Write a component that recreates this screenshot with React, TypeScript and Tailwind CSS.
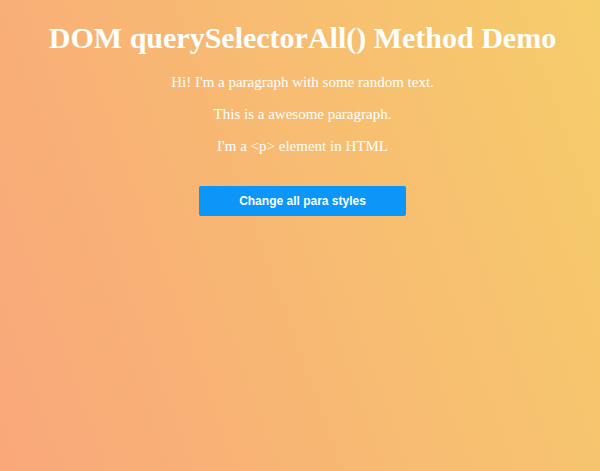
export default function App() {
  const paras = [
    "Hi! I'm a paragraph with some random text.",
    "This is a awesome paragraph.",
    "I'm a <p> element in HTML",
  ];

  return (
    <div className="min-h-[471px] w-full bg-[linear-gradient(70deg,#f9a77a_0%,#f6cd6b_100%)] text-center text-white font-['Liberation_Serif',serif]">
      <div className="pt-[19px] pl-[5px]">
        <h1 className="text-[30px] font-bold leading-[37px]">DOM querySelectorAll() Method Demo</h1>
        <div className="mt-[18px] flex flex-col gap-[16px] text-[15px] leading-[16px]">
          {paras.map((t) => (
            <p key={t}>{t}</p>
          ))}
        </div>
        <button className="mt-[32px] h-[30px] w-[207px] bg-[#0c96f8] text-[12px] font-bold text-white font-['Liberation_Sans',sans-serif] rounded-[2px]">
          Change all para styles
        </button>
      </div>
    </div>
  );
}
